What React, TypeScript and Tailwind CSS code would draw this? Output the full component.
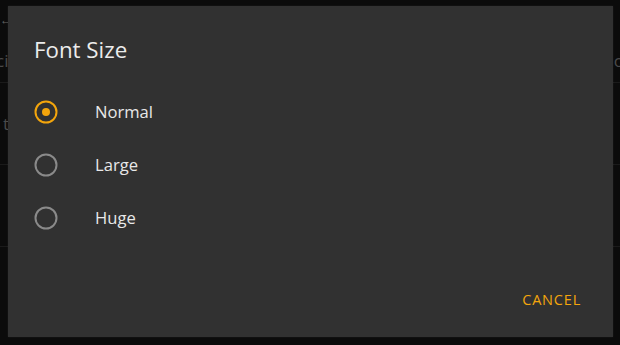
import React from "react";

function Radio({ checked }: { checked: boolean }) {
  return (
    <svg width="26" height="26" viewBox="0 0 26 26" className="shrink-0">
      <circle
        cx="13"
        cy="13"
        r="10.5"
        fill="none"
        stroke={checked ? "#f3a50c" : "#8a8a8a"}
        strokeWidth="2"
      />
      {checked && <circle cx="13" cy="13" r="4" fill="#f3a50c" />}
    </svg>
  );
}

export default function App() {
  const options = [
    { label: "Normal", checked: true },
    { label: "Large", checked: false },
    { label: "Huge", checked: false },
  ];
  return (
    <div
      className="relative w-[620px] h-[345px] overflow-hidden bg-[#0b0b0b]"
      style={{ fontFamily: '"Open Sans", "Noto Sans", sans-serif' }}
    >
      {/* background page under the dialog */}
      <div className="flex flex-col text-[17px] text-[#4a4a4a]">
        <div className="h-[40px] flex items-center text-[#666] text-[12px]">←</div>
        <div className="h-[43px] flex items-center justify-between border-b border-[#1a1a1a]">
          <span className="ml-[-4px]">ci</span>
          <span className="mr-[-4px]">o</span>
        </div>
        <div className="h-[82px] flex items-center border-b border-[#1a1a1a]">
          <span className="ml-[3px]">t</span>
        </div>
        <div className="h-[82px] border-b border-[#1a1a1a]"></div>
      </div>

      {/* dialog */}
      <div className="absolute left-[8px] top-[6px] w-[605px] h-[331px] bg-[#313131] shadow-[0_0_2px_rgba(255,255,255,0.08)] flex flex-col">
        <div className="pt-[30px] pl-[26px] h-[58px] text-[22.3px] leading-[28px] text-[#ececec]">
          Font Size
        </div>
        <div className="mt-[21px] flex flex-col">
          {options.map((o) => (
            <div key={o.label} className="h-[53px] flex items-center pl-[25px]">
              <Radio checked={o.checked} />
              <span className="ml-[36px] mt-[2px] text-[16.6px] font-medium text-[#e8e8e8]">
                {o.label}
              </span>
            </div>
          ))}
        </div>
        <div className="flex-1" />
        <div className="flex justify-end pr-[32px] pb-[27px]">
          <span className="text-[14.5px] leading-[20px] font-medium text-[#f3a50c] tracking-[0.8px]">
            CANCEL
          </span>
        </div>
      </div>
    </div>
  );
}
